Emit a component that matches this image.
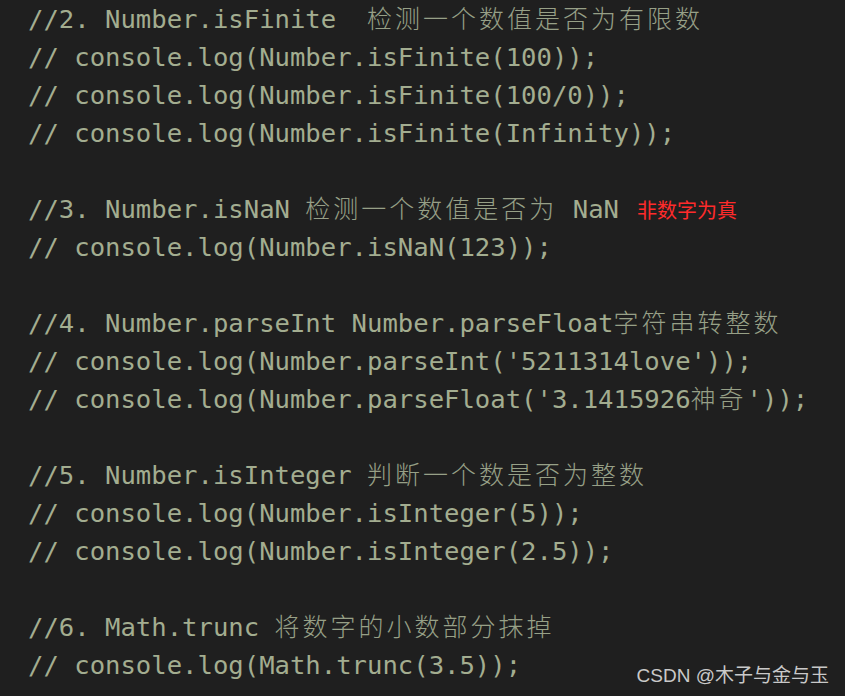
const mono = "font-['DejaVu_Sans_Mono','Liberation_Mono',monospace]";

type Part = string | { cjk: string };

const lines: Part[][] = [
  ["//2. Number.isFinite  ", { cjk: "检测一个数值是否为有限数" }],
  ["// console.log(Number.isFinite(100));"],
  ["// console.log(Number.isFinite(100/0));"],
  ["// console.log(Number.isFinite(Infinity));"],
  [],
  ["//3. Number.isNaN ", { cjk: "检测一个数值是否为" }, " NaN"],
  ["// console.log(Number.isNaN(123));"],
  [],
  ["//4. Number.parseInt Number.parseFloat", { cjk: "字符串转整数" }],
  ["// console.log(Number.parseInt('5211314love'));"],
  ["// console.log(Number.parseFloat('3.1415926", { cjk: "神奇" }, "'));"],
  [],
  ["//5. Number.isInteger ", { cjk: "判断一个数是否为整数" }],
  ["// console.log(Number.isInteger(5));"],
  ["// console.log(Number.isInteger(2.5));"],
  [],
  ["//6. Math.trunc ", { cjk: "将数字的小数部分抹掉" }],
  ["// console.log(Math.trunc(3.5));"],
];

function CodeLine({ parts, note }: { parts: Part[]; note?: string }) {
  return (
    <div className="h-[38px] leading-[38px] whitespace-pre">
      {parts.map((p, i) =>
        typeof p === "string" ? (
          <span key={i}>{p}</span>
        ) : (
          <span
            key={i}
            className="font-['Noto_Sans_CJK_SC',sans-serif] text-[25px] leading-[25px] tracking-[3px] font-light text-[#97a087]"
          >
            {p.cjk}
          </span>
        )
      )}
      {note && (
        <span className="ml-[18px] font-['Noto_Sans_CJK_SC',sans-serif] text-[20px] leading-[20px] text-[#ff2b2b]">
          {note}
        </span>
      )}
    </div>
  );
}

export default function App() {
  return (
    <div className="relative w-[845px] h-[696px] overflow-hidden bg-[#1f1f1f]">
      <div className={`${mono} text-[25.6px] text-[#a3ad90] pl-[28px]`}>
        {lines.map((parts, i) => (
          <CodeLine key={i} parts={parts} note={i === 5 ? "非数字为真" : undefined} />
        ))}
      </div>
      <div className="absolute right-[16px] bottom-[6px] font-['Liberation_Sans','Noto_Sans_CJK_SC',sans-serif] text-[19px] text-[#c9c9c9]">
        CSDN @木子与金与玉
      </div>
    </div>
  );
}
